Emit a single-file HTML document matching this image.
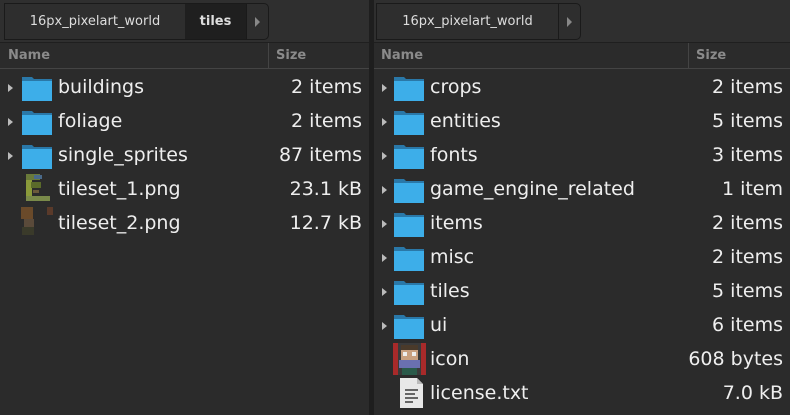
<!DOCTYPE html>
<html><head><meta charset="utf-8"><style>
*{margin:0;padding:0;box-sizing:border-box}
body{width:790px;height:415px;background:#1e1e1e;font-family:"Liberation Sans","DejaVu Sans",sans-serif;overflow:hidden;position:relative}
.pane{position:absolute;top:0;height:415px;background:#2b2b2b}
.tb{position:absolute;left:0;right:0;top:0;height:43px;background:#2f2f2f;border-bottom:1px solid #1f1f1f}
.bc{position:absolute;top:3px;height:37px;border:1px solid #1a1a1a;border-radius:0 5px 5px 0;background:#2e2e2e;display:flex;font-family:"DejaVu Sans",sans-serif;font-size:13px;color:#ddd}
.bc div{display:flex;align-items:center;justify-content:center;height:100%}
.arr{border-left:1px solid #1a1a1a;width:22px}
.arr:after{content:"";border-left:5px solid #888;border-top:5px solid transparent;border-bottom:5px solid transparent}
.hd{position:absolute;left:0;right:0;top:43px;height:26px;border-bottom:1px solid #444;font-family:"DejaVu Sans",sans-serif;font-weight:bold;font-size:13px;color:#8a8a8a}
.hd span{position:absolute;top:5px}
.hd i{position:absolute;top:0;width:1px;height:25px;background:#444}
.row{position:absolute;left:0;right:0;height:34px;font-family:"DejaVu Sans",sans-serif;font-size:19px;color:#eee}
.row .t{position:absolute;top:5px}
.row .s{position:absolute;top:5px;text-align:right}
.ex{position:absolute;left:8px;top:13px;border-left:5px solid #bbb;border-top:4px solid transparent;border-bottom:4px solid transparent}
.fd{position:absolute;top:5px;width:30px;height:25px}
</style></head><body>
<svg width="0" height="0" style="position:absolute"><defs><g id="f"><path d="M0 1h10l2 2h18v22H0z" fill="#2a78a8"/><rect x="0" y="5" width="30" height="20" fill="#3daee9"/></g></defs></svg>

<div class="pane" style="left:0;width:369px">
 <div class="tb"><div class="bc" style="left:4px;width:265px"><div style="width:180px">16px_pixelart_world</div><div style="width:61px;background:#1f1f1f;font-weight:bold">tiles</div><div class="arr"></div></div></div>
 <div class="hd"><span style="left:8px">Name</span><i style="left:268px"></i><span style="left:276px">Size</span></div>
 <div class="row" style="top:71px"><b class="ex"></b><svg class="fd" style="left:22px"><use href="#f"/></svg><span class="t" style="left:58px">buildings</span><span class="s" style="right:7px">2 items</span></div>
 <div class="row" style="top:105px"><b class="ex"></b><svg class="fd" style="left:22px"><use href="#f"/></svg><span class="t" style="left:58px">foliage</span><span class="s" style="right:7px">2 items</span></div>
 <div class="row" style="top:139px"><b class="ex"></b><svg class="fd" style="left:22px"><use href="#f"/></svg><span class="t" style="left:58px">single_sprites</span><span class="s" style="right:7px">87 items</span></div>
 <div class="row" style="top:173px"><svg style="position:absolute;left:25px;top:1px" width="26" height="30"><rect x="1" y="0" width="14" height="6" fill="#6a7a3a"/><rect x="9" y="1" width="8" height="4" fill="#4a6a8a"/><rect x="1" y="6" width="6" height="20" fill="#8a9a3a"/><rect x="6" y="8" width="10" height="6" fill="#5a6a2a"/><rect x="1" y="22" width="24" height="5" fill="#7a8a4a"/><rect x="8" y="16" width="6" height="3" fill="#6a5a3a"/></svg><span class="t" style="left:58px">tileset_1.png</span><span class="s" style="right:7px">23.1 kB</span></div>
 <div class="row" style="top:207px"><svg style="position:absolute;left:20px;top:0px" width="34" height="30"><rect x="1" y="0" width="12" height="12" fill="#6a4a2a"/><rect x="4" y="12" width="10" height="8" fill="#5a4a3a"/><rect x="27" y="0" width="6" height="8" fill="#5a3a2a"/><rect x="2" y="20" width="12" height="8" fill="#3a3a2a"/></svg><span class="t" style="left:58px">tileset_2.png</span><span class="s" style="right:7px">12.7 kB</span></div>
</div>

<div class="pane" style="left:374px;width:416px">
 <div class="tb"><div class="bc" style="left:2px;width:205px"><div style="width:181px">16px_pixelart_world</div><div class="arr"></div></div></div>
 <div class="hd"><span style="left:7px">Name</span><i style="left:314px"></i><span style="left:322px">Size</span></div>
 <div class="row" style="top:71px"><b class="ex"></b><svg class="fd" style="left:20px"><use href="#f"/></svg><span class="t" style="left:56px">crops</span><span class="s" style="right:7px">2 items</span></div>
 <div class="row" style="top:105px"><b class="ex"></b><svg class="fd" style="left:20px"><use href="#f"/></svg><span class="t" style="left:56px">entities</span><span class="s" style="right:7px">5 items</span></div>
 <div class="row" style="top:139px"><b class="ex"></b><svg class="fd" style="left:20px"><use href="#f"/></svg><span class="t" style="left:56px">fonts</span><span class="s" style="right:7px">3 items</span></div>
 <div class="row" style="top:173px"><b class="ex"></b><svg class="fd" style="left:20px"><use href="#f"/></svg><span class="t" style="left:56px">game_engine_related</span><span class="s" style="right:7px">1 item</span></div>
 <div class="row" style="top:207px"><b class="ex"></b><svg class="fd" style="left:20px"><use href="#f"/></svg><span class="t" style="left:56px">items</span><span class="s" style="right:7px">2 items</span></div>
 <div class="row" style="top:241px"><b class="ex"></b><svg class="fd" style="left:20px"><use href="#f"/></svg><span class="t" style="left:56px">misc</span><span class="s" style="right:7px">2 items</span></div>
 <div class="row" style="top:275px"><b class="ex"></b><svg class="fd" style="left:20px"><use href="#f"/></svg><span class="t" style="left:56px">tiles</span><span class="s" style="right:7px">5 items</span></div>
 <div class="row" style="top:309px"><b class="ex"></b><svg class="fd" style="left:20px"><use href="#f"/></svg><span class="t" style="left:56px">ui</span><span class="s" style="right:7px">6 items</span></div>
 <div class="row" style="top:343px"><svg style="position:absolute;left:19px;top:0px" width="33" height="32"><rect width="33" height="32" fill="#a82a2a"/><rect x="5" y="0" width="23" height="32" fill="#3a3a3a"/><rect x="8" y="2" width="17" height="5" fill="#4a3a2a"/><rect x="8" y="7" width="17" height="10" fill="#c8a080"/><rect x="10" y="9" width="4" height="4" fill="#eee"/><rect x="19" y="9" width="4" height="4" fill="#eee"/><rect x="6" y="17" width="21" height="8" fill="#6a70b0"/><rect x="9" y="25" width="15" height="7" fill="#2a5a4a"/></svg><span class="t" style="left:56px">icon</span><span class="s" style="right:7px">608 bytes</span></div>
 <div class="row" style="top:377px"><svg style="position:absolute;left:26px;top:1px" width="24" height="30"><path d="M0 0h17l6 6v24H0z" fill="#e8e8e8"/><path d="M17 0v6h6z" fill="#bbb"/><rect x="5" y="11" width="13" height="2" fill="#666"/><rect x="5" y="15" width="10" height="2" fill="#666"/><rect x="5" y="19" width="13" height="2" fill="#666"/><rect x="5" y="23" width="8" height="2" fill="#666"/></svg><span class="t" style="left:56px">license.txt</span><span class="s" style="right:7px">7.0 kB</span></div>
</div>
</body></html>
